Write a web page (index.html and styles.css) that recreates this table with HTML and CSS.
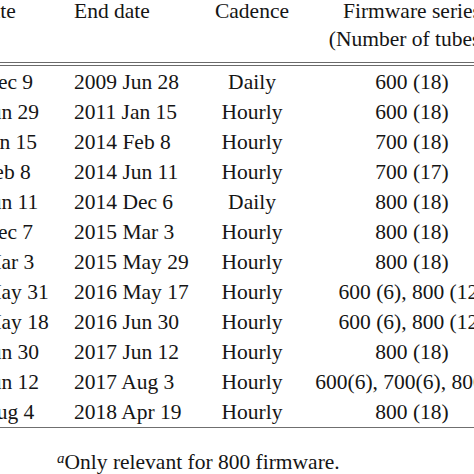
FILE: index.html
```html
<!DOCTYPE html>
<html>
<head>
<meta charset="utf-8">
<link rel="stylesheet" href="styles.css">
</head>
<body>
<div class="page">
  <div class="table">
    <div class="head">
      <div class="row hrow1">
        <div class="c1">Start date</div>
        <div class="c2">End date</div>
        <div class="c3">Cadence</div>
        <div class="c4">Firmware series</div>
      </div>
      <div class="row hrow2">
        <div class="c1"></div>
        <div class="c2"></div>
        <div class="c3"></div>
        <div class="c4">(Number of tubes)<sup class="sup">a</sup></div>
      </div>
    </div>
    <div class="double-rule"></div>
    <div class="body">
      <div class="row"><div class="c1">2008 Dec 9</div><div class="c2">2009 Jun 28</div><div class="c3">Daily</div><div class="c4">600 (18)</div></div>
      <div class="row"><div class="c1">2009 Jun 29</div><div class="c2">2011 Jan 15</div><div class="c3">Hourly</div><div class="c4">600 (18)</div></div>
      <div class="row"><div class="c1">2011 Jan 15</div><div class="c2">2014 Feb 8</div><div class="c3">Hourly</div><div class="c4">700 (18)</div></div>
      <div class="row"><div class="c1">2014 Feb 8</div><div class="c2">2014 Jun 11</div><div class="c3">Hourly</div><div class="c4">700 (17)</div></div>
      <div class="row"><div class="c1">2014 Jun 11</div><div class="c2">2014 Dec 6</div><div class="c3">Daily</div><div class="c4">800 (18)</div></div>
      <div class="row"><div class="c1">2014 Dec 7</div><div class="c2">2015 Mar 3</div><div class="c3">Hourly</div><div class="c4">800 (18)</div></div>
      <div class="row"><div class="c1">2015 Mar 3</div><div class="c2">2015 May 29</div><div class="c3">Hourly</div><div class="c4">800 (18)</div></div>
      <div class="row"><div class="c1">2015 May 31</div><div class="c2">2016 May 17</div><div class="c3">Hourly</div><div class="c4">600 (6), 800 (12)</div></div>
      <div class="row"><div class="c1">2016 May 18</div><div class="c2">2016 Jun 30</div><div class="c3">Hourly</div><div class="c4">600 (6), 800 (12)</div></div>
      <div class="row"><div class="c1">2016 Jun 30</div><div class="c2">2017 Jun 12</div><div class="c3">Hourly</div><div class="c4">800 (18)</div></div>
      <div class="row"><div class="c1">2017 Jun 12</div><div class="c2">2017 Aug 3</div><div class="c3">Hourly</div><div class="c4">600(6), 700(6), 800(6)</div></div>
      <div class="row"><div class="c1">2017 Aug 4</div><div class="c2">2018 Apr 19</div><div class="c3">Hourly</div><div class="c4">800 (18)</div></div>
    </div>
    <div class="bottom-rule"></div>
  </div>
  <p class="footnote"><sup class="fsup">a</sup>Only relevant for 800 firmware.</p>
</div>
</body>
</html>
```
FILE: styles.css
```css
html, body {
  margin: 0;
  padding: 0;
  overflow: hidden;
  background: #ffffff;
}
body {
  width: 474px;
  height: 474px;
  font-family: "Liberation Serif", "Times New Roman", serif;
  font-size: 21.5px;
  color: #151515;
}
.page {
  width: 474px;
  height: 474px;
  overflow: hidden;
}
.table {
  width: 594px;
  margin-left: -66px;
}
.row {
  display: grid;
  grid-template-columns: 140px 134px 88px 232px;
  white-space: nowrap;
}
.c1, .c2 {
  text-align: left;
}
.c3, .c4 {
  text-align: center;
}
.head {
  padding-bottom: 12.5px;
}
.hrow1 {
  line-height: 22px;
  height: 27.7px;
}
.hrow2 {
  line-height: 22px;
}
.sup {
  font-size: 15px;
  font-style: italic;
  vertical-align: 7px;
  line-height: 0;
}
.double-rule {
  height: 1px;
  border-top: 1px solid #6a6a6a;
  border-bottom: 1px solid #6a6a6a;
  box-sizing: content-box;
  padding-top: 0.8px;
}
.body {
  padding-top: 0.7px;
}
.body .row {
  line-height: 30px;
  height: 30px;
}
.bottom-rule {
  border-top: 1.5px solid #6f6f6f;
  margin-top: 0.6px;
}
.footnote {
  margin: 23px 0 0 57px;
  line-height: 22px;
  white-space: nowrap;
}
.fsup {
  font-size: 15px;
  font-style: italic;
  vertical-align: 6px;
  line-height: 0;
}
```
